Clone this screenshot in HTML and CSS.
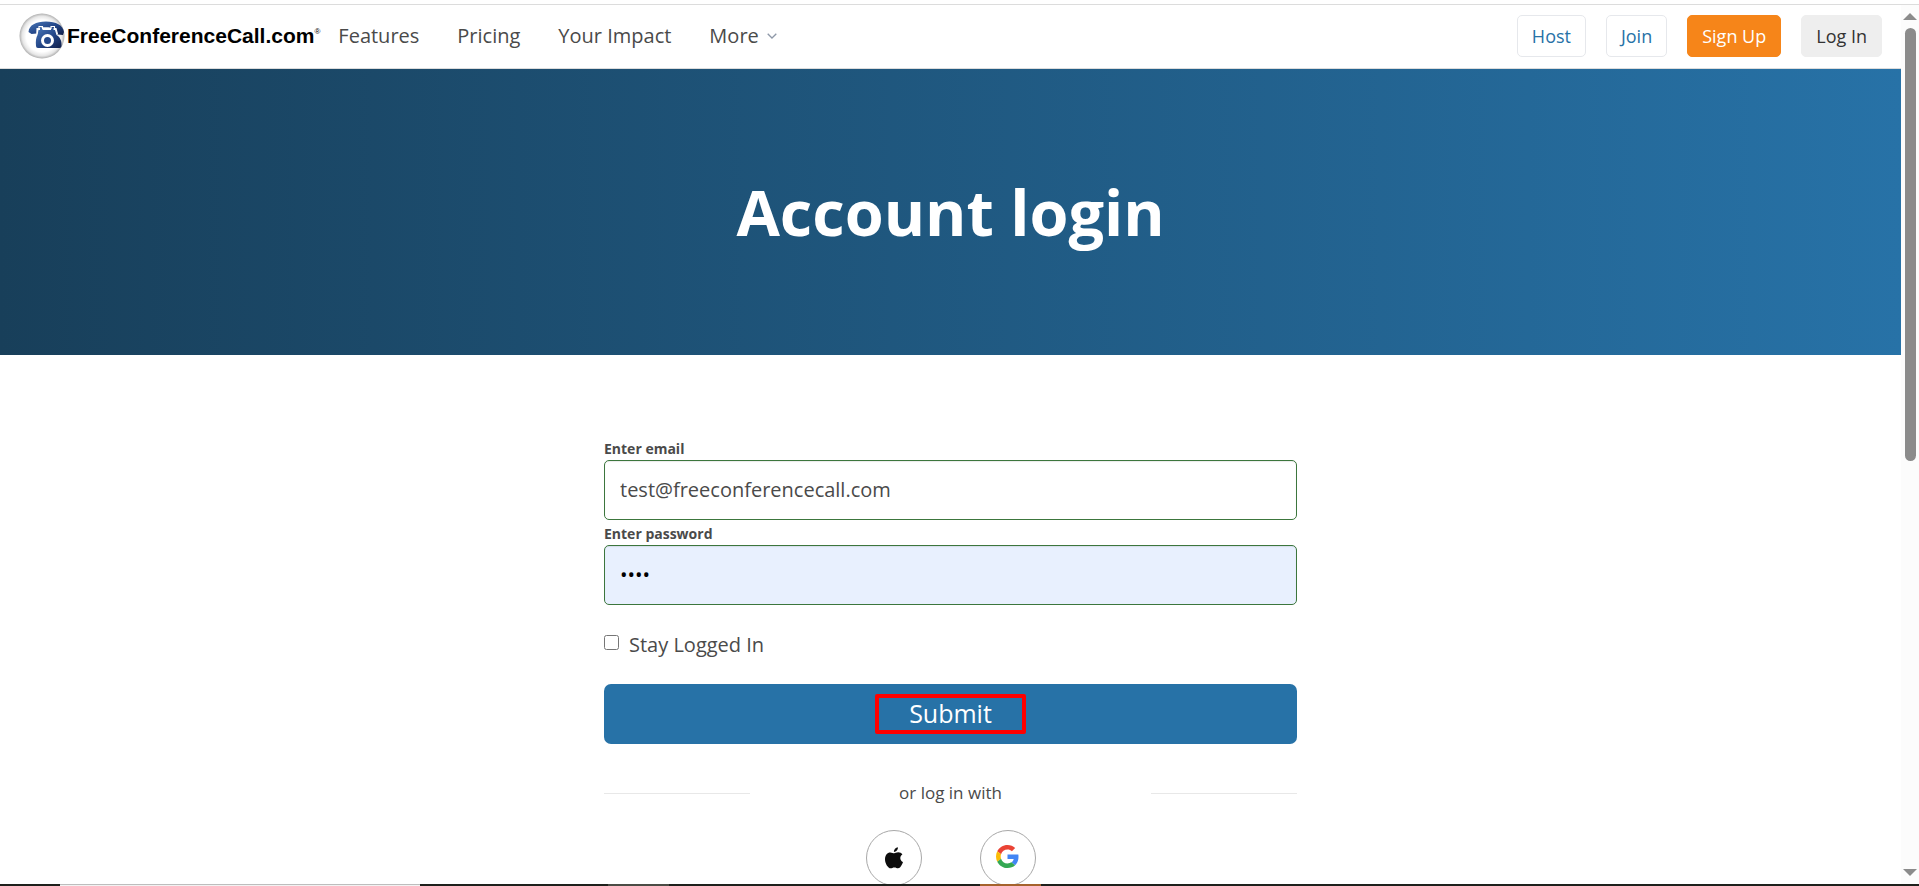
FILE: index.html
```
<!DOCTYPE html>
<html lang="en">

<head>
    <meta charset="UTF-8">
    <meta name="viewport" content="width=device-width, initial-scale=1.0">
    <title>Account login</title>
    <link rel="stylesheet" href="styles.css">
</head>

<body>

    <div class="toolbar-edge"></div>

    <div class="viewport">
        <div class="page">
            <header class="header">
                <a href="#" class="logo">
                    <svg class="logo-icon" width="46" height="46" viewBox="0 0 46 46" aria-hidden="true">
                        <defs>
                            <radialGradient id="ball" cx="50%" cy="50%" r="50%">
                                <stop offset="0.7" stop-color="#ffffff" />
                                <stop offset="0.88" stop-color="#e6e6e6" />
                                <stop offset="1" stop-color="#b0b0b0" />
                            </radialGradient>
                            <linearGradient id="phone" x1="0" y1="0" x2="1" y2="1">
                                <stop offset="0" stop-color="#4a78b8" />
                                <stop offset="0.5" stop-color="#25488a" />
                                <stop offset="1" stop-color="#101f4a" />
                            </linearGradient>
                        </defs>
                        <circle cx="23" cy="23" r="22.5" fill="url(#ball)" />
                        <path d="M9.500 19 C10 12 17 8.500 27 8.500 C37 8.500 44 12 45 19 L44 22 L38.500 21.500 L37 16 C31 13.500 22 13.500 18 16 L17.500 20.500 L12.500 21 Z" fill="url(#phone)" />
                        <path d="M19.500 17 H21 V15 H23.500 V17 H32 V15 H34.500 V17 H36 L37.500 22 C41 24 43 28 42.500 33 Q42.500 35 40.500 35 H19 Q17 35 17 33 C16.500 28 17 25 18.500 22 Z" fill="url(#phone)" />
                        <path d="M18 21 V15.500 H20 V13.500 H23.500 V15.500 H32 V13.500 H35.500 V15.500 H37 L38.500 21" fill="none" stroke="#ffffff" stroke-width="1.100" />
                        <circle cx="28.500" cy="27.500" r="5" fill="#25488a" stroke="#ffffff" stroke-width="3" />
                    </svg>
                    <span class="logo-text">FreeConferenceCall.com</span><span class="logo-mark">®</span>
                </a>

                <nav class="nav">
                    <a href="#">Features</a>
                    <a href="#">Pricing</a>
                    <a href="#">Your Impact</a>
                    <a href="#" class="nav-more">More
                        <svg width="10" height="6" viewBox="0 0 10 6" aria-hidden="true">
                            <path d="M0.700 0.700 L5 5 L9.300 0.700" fill="none" stroke="#8e98a8" stroke-width="1.300" />
                        </svg>
                    </a>
                </nav>

                <div class="actions">
                    <button type="button" class="btn">Host</button>
                    <button type="button" class="btn">Join</button>
                    <button type="button" class="btn btn-signup">Sign Up</button>
                    <button type="button" class="btn btn-login">Log In</button>
                </div>
            </header>

            <section class="hero">
                <h1>Account login</h1>
            </section>

            <form class="login-form" onsubmit="event.preventDefault();">
                <label for="email" class="field-label">Enter email</label>
                <input type="email" id="email" class="field" value="test@freeconferencecall.com">

                <label for="password" class="field-label">Enter password</label>
                <input type="password" id="password" class="field field-filled" value="test">

                <div class="stay">
                    <input type="checkbox" id="stay">
                    <label for="stay">Stay Logged In</label>
                </div>

                <button type="submit" class="submit"><span class="highlight">Submit</span></button>

                <div class="divider">
                    <span>or log in with</span>
                </div>

                <div class="social">
                    <button type="button" class="social-btn" aria-label="Apple">
                        <svg width="18" height="22" viewBox="0 0 18 22" aria-hidden="true">
                            <path d="M12.900 0.200 C13.100 2.600 11.200 4.900 8.900 4.900 C8.700 2.600 10.700 0.500 12.900 0.200 Z" fill="#0d0d0d" />
                            <path d="M9.200 6.200 C10.200 6.200 11.300 5.300 13.200 5.300 C15 5.300 16.600 6.200 17.400 7.500 C14.300 9.300 14.800 13.700 18 15 C17.200 17.400 15.300 21.300 13.100 21.300 C11.700 21.300 11.100 20.500 9.400 20.500 C7.700 20.500 7 21.300 5.700 21.300 C3 21.300 0 16.500 0 12.200 C0 8 2.500 5.400 5.200 5.400 C7 5.400 8.200 6.200 9.200 6.200 Z" fill="#0d0d0d" />
                        </svg>
                    </button>
                    <button type="button" class="social-btn" aria-label="Google">
                        <svg class="google" width="23" height="23" viewBox="0 0 48 48" aria-hidden="true">
                            <path fill="#EA4335" d="M24 9.500c3.540 0 6.710 1.220 9.210 3.600l6.850-6.850C35.900 2.380 30.470 0 24 0 14.620 0 6.510 5.380 2.560 13.220l7.980 6.190C12.430 13.720 17.740 9.500 24 9.500z" />
                            <path fill="#4285F4" d="M46.980 24.550c0-1.570-.15-3.090-.38-4.550H24v9.020h12.940c-.58 2.960-2.260 5.480-4.780 7.180l7.730 6c4.510-4.180 7.090-10.360 7.090-17.650z" />
                            <path fill="#FBBC05" d="M10.530 28.590c-.48-1.450-.76-2.990-.76-4.590s.27-3.140.76-4.590l-7.980-6.190C.92 16.460 0 20.120 0 24c0 3.880.92 7.540 2.560 10.780l7.970-6.190z" />
                            <path fill="#34A853" d="M24 48c6.480 0 11.930-2.130 15.890-5.810l-7.730-6c-2.150 1.450-4.920 2.300-8.160 2.300-6.260 0-11.570-4.220-13.470-9.910l-7.980 6.190C6.510 42.620 14.620 48 24 48z" />
                        </svg>
                    </button>
                </div>
            </form>
        </div>

        <div class="scrollbar">
            <span class="arrow arrow-up"></span>
            <div class="track">
                <div class="thumb"></div>
            </div>
            <span class="arrow arrow-down"></span>
        </div>
    </div>

    <div class="taskbar">
        <span class="task-search"></span>
        <span class="task-app"></span>
        <span class="task-active"></span>
    </div>

</body>
</html>
```
FILE: styles.css
```
* {
    box-sizing: border-box;
}

body {
    margin: 0;
    height: 100vh;
    display: flex;
    flex-direction: column;
    overflow: hidden;
    font-family: 'Open Sans', sans-serif;
    font-size: 20px;
    color: #4a4a4a;
    background-color: #ffffff;
}

button,
input {
    font-family: inherit;
}

a {
    color: inherit;
    text-decoration: none;
}

.toolbar-edge {
    flex: none;
    height: 5px;
    border-bottom: 1px solid #dcdcdc;
}

.viewport {
    flex: 1;
    min-height: 0;
    display: flex;
}

.page {
    flex: 1;
    overflow: hidden;
}

/* Header */
.header {
    height: 64px;
    padding: 0 19px 1px;
    display: flex;
    align-items: center;
    border-bottom: 1px solid #dcdcdc;
}

.logo {
    display: flex;
    align-items: center;
    color: #000000;
    font-family: 'Liberation Sans', Arial, sans-serif;
}

.logo-text {
    margin-left: 2px;
    font-size: 21px;
    font-weight: bold;
}

.logo-mark {
    font-size: 8px;
    align-self: flex-start;
    margin-top: 14px;
}

.nav {
    display: flex;
    gap: 38px;
    margin-left: 18px;
    line-height: 28px;
}

.nav-more {
    display: flex;
    align-items: center;
    gap: 8px;
}

.actions {
    display: flex;
    gap: 20px;
    margin-left: auto;
}

.btn {
    height: 42px;
    padding: 0 14px;
    font-size: 18px;
    color: #2772a7;
    background-color: #ffffff;
    border: 1px solid #e6e8ec;
    border-radius: 5px;
    cursor: pointer;
}

.btn-signup {
    color: #ffffff;
    background-color: #f68519;
    border-color: #f68519;
}

.btn-login {
    color: #333333;
    background-color: #eeeeee;
    border-color: #eeeeee;
}

/* Hero */
.hero {
    height: 286px;
    display: flex;
    align-items: center;
    justify-content: center;
    background: linear-gradient(90deg, #183f5a, #2772a7);
}

.hero h1 {
    margin: 0;
    font-size: 63px;
    line-height: 80px;
    font-weight: bold;
    color: #ffffff;
}

/* Login form */
.login-form {
    width: 693px;
    max-width: 90%;
    margin: 0 auto;
    padding-top: 80px;
}

.field-label {
    display: block;
    height: 25px;
    font-size: 14px;
    line-height: 28px;
    font-weight: bold;
}

.field {
    display: block;
    width: 100%;
    height: 60px;
    padding: 0 15px 2px;
    font-size: 20px;
    color: #4a4a4a;
    background-color: #ffffff;
    border: 1px solid #3c763d;
    border-radius: 5px;
    box-shadow: inset 0 1px 1px rgba(0, 0, 0, 0.08);
}

.field-filled {
    color: #000000;
    background-color: #e8f0fe;
}

.stay {
    display: flex;
    align-items: center;
    gap: 10px;
    margin: 25px 0;
    line-height: 29px;
}

.stay input {
    width: 15px;
    height: 15px;
    margin: 0 0 4px;
}

.submit {
    display: block;
    width: 100%;
    height: 60px;
    padding: 0 0 2px;
    font-size: 25px;
    color: #ffffff;
    background-color: #2772a7;
    border: none;
    border-radius: 7px;
    cursor: pointer;
}

.highlight {
    position: relative;
}

.highlight::after {
    content: "";
    position: absolute;
    inset: -2px -34px -4px;
    border: 4px solid #ff0000;
    border-radius: 2px;
}

.divider {
    display: flex;
    align-items: center;
    justify-content: space-between;
    margin-top: 35px;
    font-size: 17px;
    line-height: 28px;
}

.divider::before,
.divider::after {
    content: "";
    width: 21%;
    border-top: 1px solid #e8e8e8;
}

.social {
    display: flex;
    justify-content: center;
    gap: 58px;
    margin-top: 23px;
}

.social-btn {
    width: 56px;
    height: 56px;
    padding: 0;
    display: flex;
    align-items: center;
    justify-content: center;
    background-color: #ffffff;
    border: 1px solid #a8a8a8;
    border-radius: 50%;
    cursor: pointer;
}

.google {
    margin-bottom: 4px;
}

/* Scrollbar */
.scrollbar {
    flex: none;
    width: 18px;
    padding: 8px 0;
    display: flex;
    flex-direction: column;
    align-items: center;
    gap: 8px;
    background-color: #fcfcfc;
}

.arrow {
    border-left: 7px solid transparent;
    border-right: 7px solid transparent;
}

.arrow-up {
    border-bottom: 7px solid #8b8b8b;
}

.arrow-down {
    border-top: 7px solid #8b8b8b;
}

.track {
    flex: 1;
}

.thumb {
    width: 11px;
    height: 52%;
    background-color: #8b8b8b;
    border-radius: 6px;
}

/* Taskbar */
.taskbar {
    flex: none;
    height: 2px;
    display: flex;
    background-color: #1e201c;
}

.task-search {
    width: 360px;
    margin-left: 60px;
    background-color: #f2f2f2;
    border-top: 1px solid #bdbdbd;
}

.task-app {
    width: 61px;
    margin-left: 188px;
    background-color: #4b4c45;
}

.task-active {
    width: 61px;
    margin-left: 311px;
    background-color: #a5622c;
}
```
